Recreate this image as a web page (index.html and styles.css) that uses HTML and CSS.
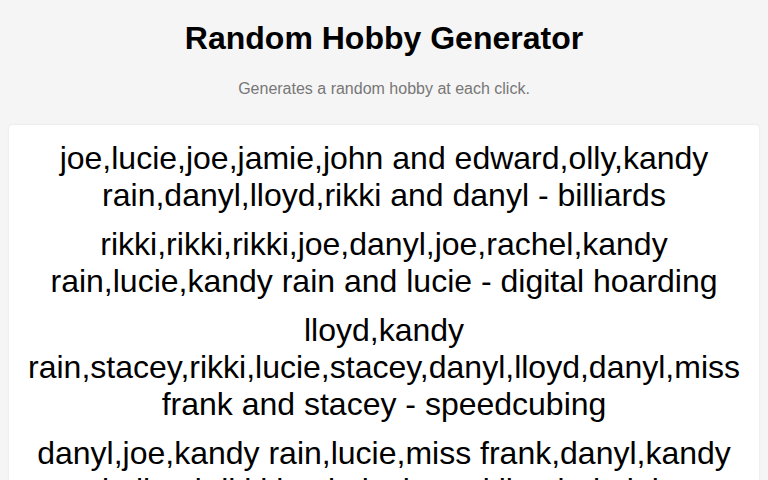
FILE: index.html
```html
<!DOCTYPE html>
<html lang="en">
<head>
    <meta charset="UTF-8">
    <meta name="viewport" content="width=device-width, initial-scale=1.0">
    <title>Random Hobby Generator</title>
    <link rel="stylesheet" href="styles.css">
</head>
<body>

    <header>
        <h1>Random Hobby Generator</h1>
        <p>Generates a random hobby at each click.</p>
    </header>

    <div class="container">
        <!-- Hobbies get added here -->
        <section class="hobby-list" id="hobby-list">
            <p class="hobby">joe,lucie,joe,jamie,john and edward,olly,kandy rain,danyl,lloyd,rikki and danyl - billiards</p>
            <p class="hobby">rikki,rikki,rikki,joe,danyl,joe,rachel,kandy rain,lucie,kandy rain and lucie - digital hoarding</p>
            <p class="hobby">lloyd,kandy rain,stacey,rikki,lucie,stacey,danyl,lloyd,danyl,miss frank and stacey - speedcubing</p>
            <p class="hobby">danyl,joe,kandy rain,lucie,miss frank,danyl,kandy rain,lloyd,rikki,jamie,lucie and lloyd - knitting</p>
        </section>
    </div>

</body>
</html>
```

FILE: styles.css
```css
* {
    margin: 0;
    padding: 0;
    box-sizing: border-box;
}
body {
    font-family: 'Liberation Sans', Arial, sans-serif;
    background-color: #f5f5f5;
    color: #000;
}
header {
    text-align: center;
    padding: 20px 20px 27px;
}
header h1 {
    font-size: 32px;
    font-weight: 700;
    line-height: 37px;
    margin-bottom: 23px;
}
header p {
    font-size: 16px;
    color: #777;
    line-height: 18px;
}
.container {
    margin: 0 9px;
}
.hobby-list {
    background-color: #fff;
    border-radius: 4px;
    box-shadow: 0 0 3px rgba(0, 0, 0, 0.08);
    padding: 15px;
}
.hobby {
    font-size: 32px;
    line-height: 37px;
    text-align: center;
    margin-bottom: 12px;
}
```
